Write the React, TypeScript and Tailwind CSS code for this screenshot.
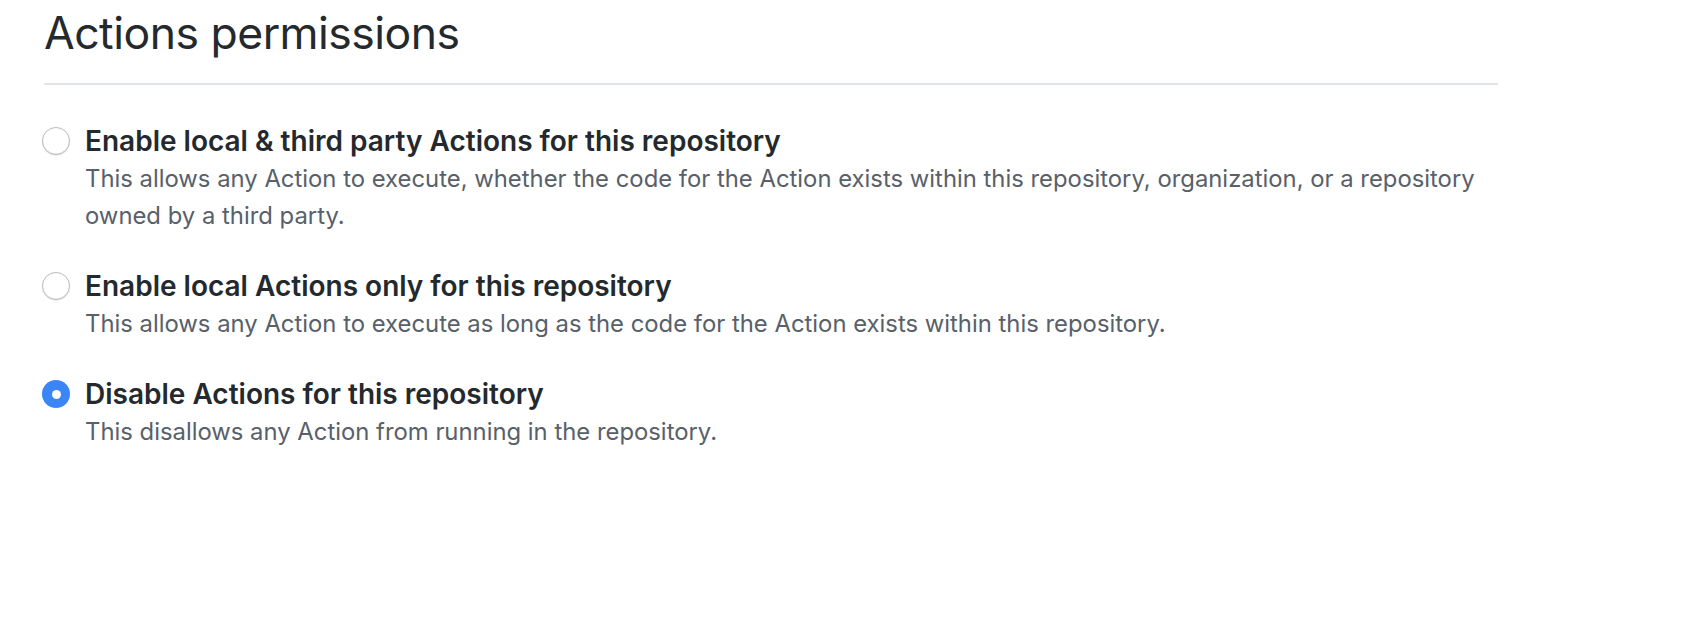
import React from "react";

type Opt = { title: string; desc: string; checked?: boolean };

const options: Opt[] = [
  {
    title: "Enable local & third party Actions for this repository",
    desc: "This allows any Action to execute, whether the code for the Action exists within this repository, organization, or a repository owned by a third party.",
  },
  {
    title: "Enable local Actions only for this repository",
    desc: "This allows any Action to execute as long as the code for the Action exists within this repository.",
  },
  {
    title: "Disable Actions for this repository",
    desc: "This disallows any Action from running in the repository.",
    checked: true,
  },
];

function Radio({ checked }: { checked?: boolean }) {
  if (checked) {
    return (
      <div className="w-[28px] h-[28px] rounded-full bg-[#3b86f7] flex items-center justify-center shrink-0">
        <div className="w-[9px] h-[9px] rounded-full bg-white" />
      </div>
    );
  }
  return (
    <div className="w-[28px] h-[28px] rounded-full bg-white border border-[#bdbdbd] shadow-[inset_0_-1px_1px_rgba(0,0,0,0.06),0_0.5px_1px_rgba(0,0,0,0.12)] shrink-0" />
  );
}

export default function App() {
  return (
    <div
      className="w-[1696px] h-[636px] bg-white pl-[44px] pt-[4px]"
      style={{ fontFamily: "Inter, 'Noto Sans', sans-serif" }}
    >
      <div className="w-[1454px]">
        <h2 className="text-[44.5px] leading-[58px] font-normal text-[#24292e] pb-[21px] border-b-2 border-[#e1e4e8] tracking-[-0.5px]">
          Actions permissions
        </h2>
        <div className="flex flex-col gap-[35px] pt-[39px]">
          {options.map((o) => (
            <div key={o.title} className="flex items-start -ml-[2px]">
              <div className="pt-[3px]">
                <Radio checked={o.checked} />
              </div>
              <div className="ml-[15px]">
                <div className="text-[28px] leading-[34px] font-semibold text-[#24292e]">
                  {o.title}
                </div>
                <div className="text-[23.85px] leading-[37px] text-[#586069] mt-[2px]">
                  {o.desc}
                </div>
              </div>
            </div>
          ))}
        </div>
      </div>
    </div>
  );
}
